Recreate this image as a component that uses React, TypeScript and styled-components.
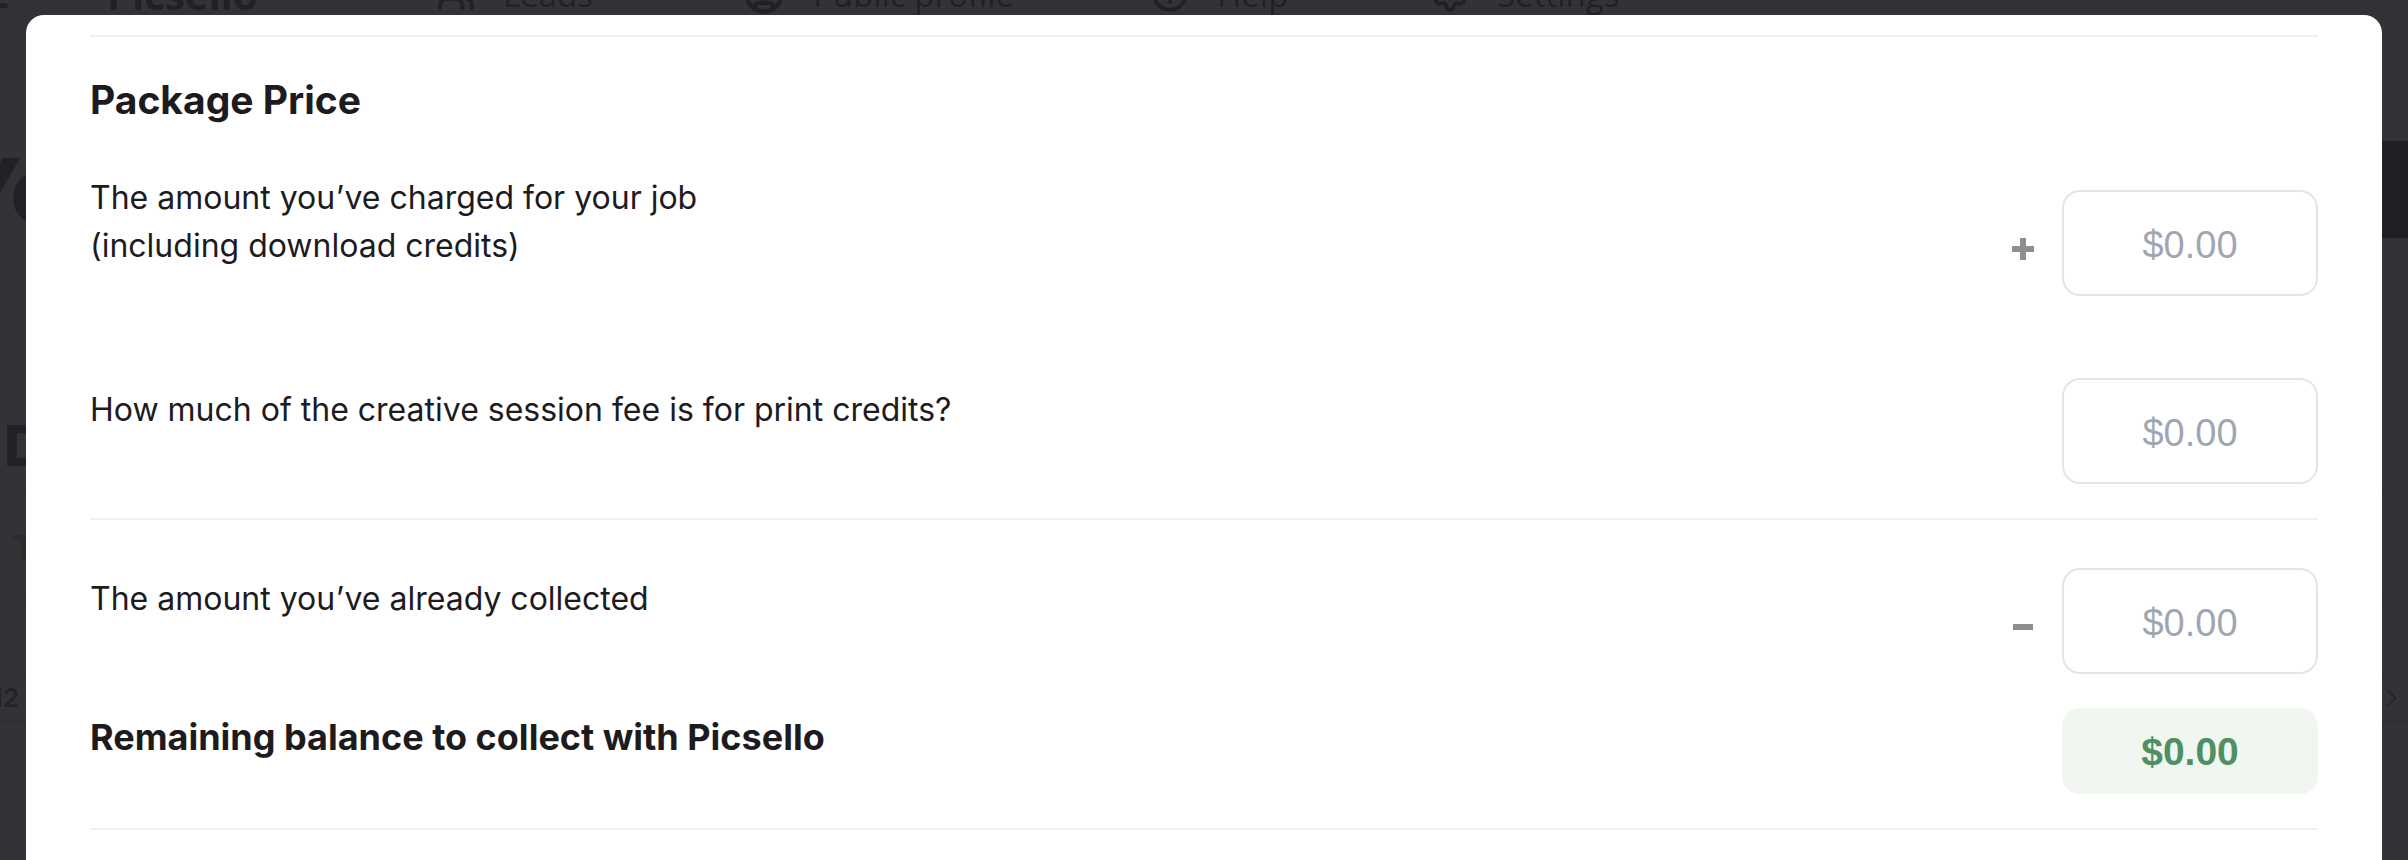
import React from "react";
import styled, { createGlobalStyle } from "styled-components";
import { Users, CircleUser, HelpCircle, Settings, ChevronRight, Menu } from "lucide-react";

const GlobalStyle = createGlobalStyle`
  html, body {
    margin: 0;
    padding: 0;
    width: 2408px;
    height: 860px;
    overflow: hidden;
    background: #ffffff;
  }
  body {
    font-family: Inter, "Noto Sans", sans-serif;
    color: #1d1b1e;
  }
  * { box-sizing: border-box; }
`;

/* ---------- background page ---------- */

const Page = styled.div`
  width: 2408px;
  height: 860px;
  overflow: hidden;
  background: #ffffff;
`;

const Nav = styled.nav`
  display: flex;
  align-items: center;
  height: 64px;
  margin-top: -38px;
  font-family: "Open Sans", sans-serif;
  font-size: 33px;
  color: #111;
`;

const NavMenu = styled.div`
  width: 60px;
  margin-left: -28px;
  display: flex;
`;

const Brand = styled.div`
  font-weight: 700;
  font-size: 40px;
  margin-left: 75px;
  width: 330px;
`;

const NavItem = styled.div<{ $w: number }>`
  display: flex;
  align-items: center;
  gap: 28px;
  width: ${(p) => p.$w}px;
`;

const HeaderRow = styled.div`
  display: flex;
  align-items: center;
  justify-content: space-between;
  margin-top: 115px;
  height: 97px;
`;

const PageTitle = styled.h1`
  margin: 0 0 0 -44px;
  font-size: 88px;
  font-weight: 800;
  letter-spacing: -1px;
`;

const DarkButton = styled.div`
  width: 300px;
  height: 97px;
  margin-right: -40px;
  padding-right: 90px;
  background: #000;
  color: #fff;
  border-radius: 10px;
  display: flex;
  align-items: center;
  justify-content: center;
  font-size: 28px;
`;

const Section = styled.section`
  margin-top: 178px;
  padding-left: 4px;
`;

const SectionTitle = styled.h2`
  margin: 0;
  font-size: 56px;
  font-weight: 800;
  line-height: 60px;
`;

const TableHead = styled.div`
  margin-top: 18px;
  height: 107px;
  border-top: 2px solid #ececec;
  border-bottom: 2px solid #ececec;
  display: flex;
  align-items: center;
  padding-left: 8px;
  font-size: 34px;
  font-weight: 700;
  color: #9a9a9a;
`;

const TableRow = styled.div<{ $h: number }>`
  height: ${(p) => p.$h}px;
  border-bottom: 2px solid #d9dde6;
  display: flex;
  align-items: center;
  justify-content: space-between;
  margin-left: -12px;
  font-size: 26px;
  font-weight: 600;
  color: #333;
`;

const Chevron = styled.div`
  margin-right: 2px;
  display: flex;
  color: #555;
`;

/* ---------- overlay + modal ---------- */

const Overlay = styled.div`
  position: fixed;
  inset: 0;
  background: rgba(35, 33, 38, 0.925);
`;

const Modal = styled.div`
  position: absolute;
  left: 26px;
  right: 26px;
  top: 15px;
  height: 920px;
  background: #ffffff;
  border-radius: 18px;
  padding: 20px 64px 0 64px;
  color: #1d1b1e;
`;

const Divider = styled.div<{ $mt?: number }>`
  height: 2px;
  background: #f1f1f2;
  margin-top: ${(p) => p.$mt ?? 0}px;
`;

const Heading = styled.h2`
  margin: 39px 0 0 0;
  font-size: 39px;
  line-height: 48px;
  font-weight: 700;
`;

const Row = styled.div<{ $mt: number }>`
  display: flex;
  align-items: flex-start;
  justify-content: space-between;
  margin-top: ${(p) => p.$mt}px;
`;

const Label = styled.div<{ $pt?: number; $strong?: boolean }>`
  padding-top: ${(p) => p.$pt ?? 0}px;
  font-size: ${(p) => (p.$strong ? 36 : 32)}px;
  font-weight: ${(p) => (p.$strong ? 700 : 400)};
  line-height: 48px;
`;

const Control = styled.div<{ $mt?: number }>`
  display: flex;
  align-items: center;
  gap: 28px;
  margin-top: ${(p) => p.$mt ?? 0}px;
`;

const Sign = styled.div`
  width: 22px;
  display: flex;
  justify-content: center;
  padding-top: 12px;
`;

const MoneyInput = styled.input`
  width: 256px;
  height: 106px;
  border: 2px solid #e4e5eb;
  border-radius: 18px;
  background: #fff;
  text-align: center;
  font-family: "Liberation Sans", Arial, sans-serif;
  font-size: 38px;
  color: #1d1b1e;
  outline: none;
  padding: 4px 0 0 0;
  &::placeholder {
    color: #9fa6b2;
  }
`;

const Balance = styled.div`
  width: 256px;
  height: 86px;
  border-radius: 18px;
  background: #f1f7f0;
  color: #4f8f61;
  display: flex;
  align-items: center;
  justify-content: center;
  padding-top: 2px;
  font-family: "Liberation Sans", Arial, sans-serif;
  font-weight: 700;
  font-size: 39px;
`;

const PlusIcon = () => (
  <svg width="22" height="22" viewBox="0 0 22 22" aria-hidden="true">
    <rect x="8" y="0" width="6" height="22" fill="#8e8e8e" />
    <rect x="0" y="8" width="22" height="6" fill="#8e8e8e" />
  </svg>
);

const MinusIcon = () => (
  <svg width="20" height="6" viewBox="0 0 20 6" aria-hidden="true">
    <rect x="0" y="0" width="20" height="6" fill="#8e8e8e" />
  </svg>
);

export default function App() {
  return (
    <>
      <GlobalStyle />
      <Page>
        <Nav>
          <NavMenu>
            <Menu size={40} strokeWidth={3} />
          </NavMenu>
          <Brand>Picsello</Brand>
          <NavItem $w={306}>
            <Users size={38} strokeWidth={2.5} />
            Leads
          </NavItem>
          <NavItem $w={408}>
            <CircleUser size={42} strokeWidth={2.5} />
            Public profile
          </NavItem>
          <NavItem $w={280}>
            <HelpCircle size={38} strokeWidth={2.5} />
            Help
          </NavItem>
          <NavItem $w={300}>
            <Settings size={38} strokeWidth={2.5} />
            Settings
          </NavItem>
        </Nav>
        <HeaderRow>
          <PageTitle>Your Jobs</PageTitle>
          <DarkButton>Create a job</DarkButton>
        </HeaderRow>
        <Section>
          <SectionTitle>Drafts</SectionTitle>
          <TableHead>Title</TableHead>
          <TableRow $h={74} />
          <TableRow $h={47}>
            <span>12</span>
            <Chevron>
              <ChevronRight size={28} strokeWidth={2} />
            </Chevron>
          </TableRow>
        </Section>
      </Page>

      <Overlay>
        <Modal>
          <Divider />
          <Heading>Package Price</Heading>

          <Row $mt={50}>
            <Label>
              The amount you’ve charged for your job
              <br />
              (including download credits)
            </Label>
            <Control $mt={16}>
              <Sign>
                <PlusIcon />
              </Sign>
              <MoneyInput placeholder="$0.00" />
            </Control>
          </Row>

          <Row $mt={82}>
            <Label $pt={8}>How much of the creative session fee is for print credits?</Label>
            <Control>
              <MoneyInput placeholder="$0.00" />
            </Control>
          </Row>

          <Divider $mt={34} />

          <Row $mt={48}>
            <Label $pt={7}>The amount you’ve already collected</Label>
            <Control>
              <Sign>
                <MinusIcon />
              </Sign>
              <MoneyInput placeholder="$0.00" />
            </Control>
          </Row>

          <Row $mt={34}>
            <Label $pt={5} $strong>
              Remaining balance to collect with Picsello
            </Label>
            <Control>
              <Balance>$0.00</Balance>
            </Control>
          </Row>

          <Divider $mt={34} />
        </Modal>
      </Overlay>
    </>
  );
}
